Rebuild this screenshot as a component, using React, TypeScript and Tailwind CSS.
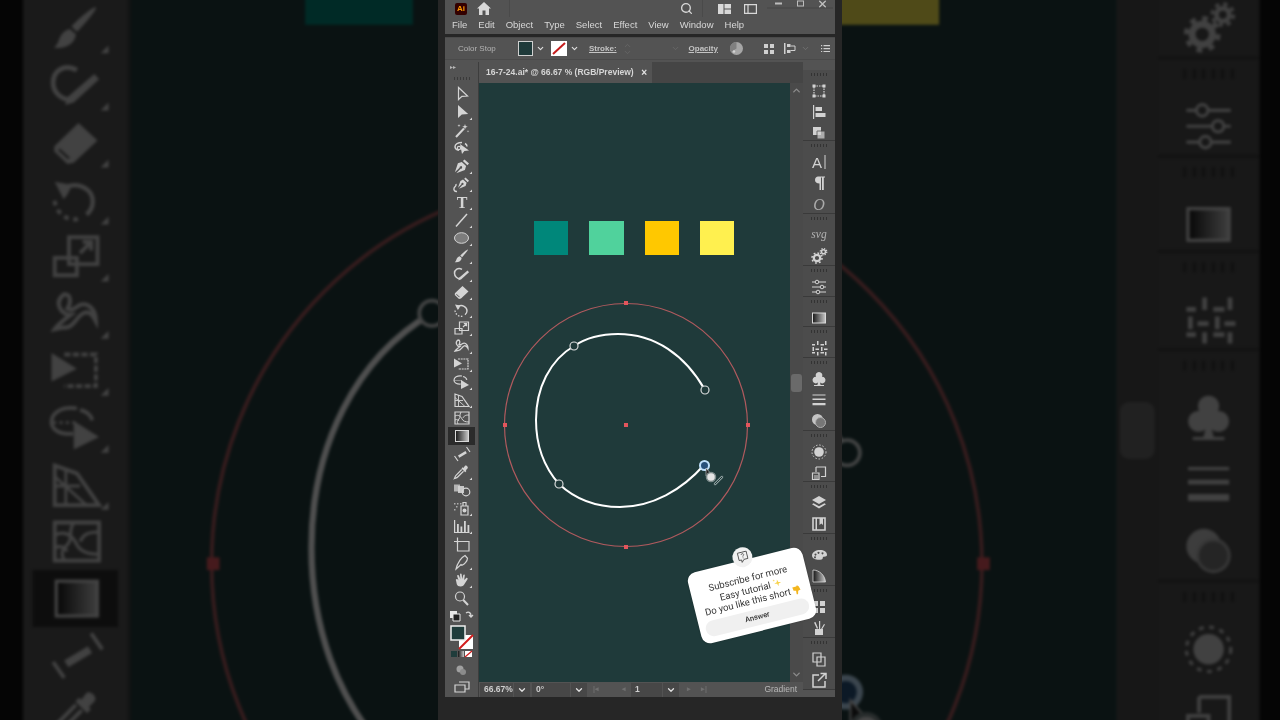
import type { ReactNode } from "react";
import { ChevronDown, ChevronUp, Search } from "lucide-react";

const uiFont = "font-['Liberation_Sans',Arial,sans-serif]";

function Glyph({ w = 22, h = 18, children }: { w?: number; h?: number; children: ReactNode }) {
  return (
    <svg width={w} height={h} viewBox={`0 0 ${w} ${h}`} fill="currentColor" className="block shrink-0">
      {children}
    </svg>
  );
}

function GradientDef({ id }: { id: string }) {
  return (
    <defs>
      <linearGradient id={id}>
        <stop offset="0" stopColor="#151515" />
        <stop offset="1" stopColor="#c8c8c8" />
      </linearGradient>
    </defs>
  );
}

const line = { fill: "none", stroke: "currentColor", strokeWidth: 1.2 };

// left toolbar, top to bottom
const tools: { key: string; corner?: boolean; art: ReactNode }[] = [
  { key: "select", art: <path d="M7.5 2.5v12l3.4-3.2 5.6-.3z" {...line} /> },
  { key: "direct", corner: true, art: <path d="M7 2v13l3.8-3.6 6.4-.4z" /> },
  {
    key: "wand",
    art: (
      <>
        <path d="M5 16l8-8.5" {...line} strokeWidth={2} />
        <path d="M14 3l.7 2 2 .7-2 .7-.7 2-.7-2-2-.7 2-.7zM8 3l.4 1.2 1.2.4-1.2.4L8 6.2 7.600 5l-1.200-.4 1.200-.4zM17 9l.3 1 1 .3-1 .3-.3 1-.3-1-1-.3 1-.3z" />
      </>
    ),
  },
  {
    key: "lasso",
    art: (
      <>
        <path d="M11 3.500c-4 0-7 1.800-7 4.300 0 1.900 1.800 3.200 4 3.500M14 4.500c1.300.7 2 1.700 2 3" {...line} strokeWidth={1.5} />
        <path d="M9 5l2 10 2.400-3 4.600-.4z" />
        <circle cx="8" cy="9" r="1.700" {...line} />
      </>
    ),
  },
  {
    key: "pen",
    corner: true,
    art: (
      <path d="M13.500 2.500l4.500 4-1.600 1.700-4.500-4.200zM10.800 5l4.300 4-1.200 4-8.600 3.300 4.300-4.600a1.300 1.300 0 1 0-1-1L3.900 15.200 6.900 6.300z" />
    ),
  },
  {
    key: "curvature",
    corner: true,
    art: (
      <>
        <path d="M14.500 2.500l3.500 3.300-1.300 1.400-3.500-3.400zM12 4.500l3.600 3.300-1 3.200-6.600 2.800 3.300-3.800a1.100 1.100 0 1 0-.9-.8L7 12.800 9.400 6z" />
        <path d="M6 16.500c-2.800.2-3.600-2-2.800-3.800C4 11 5.500 11.500 5 9" {...line} strokeWidth={1.4} />
      </>
    ),
  },
  {
    key: "type",
    corner: true,
    art: (
      <text x="11" y="15" textAnchor="middle" fontSize="16" fontWeight="700" fontFamily="'Liberation Serif',serif">
        T
      </text>
    ),
  },
  { key: "segment", corner: true, art: <path d="M5 15.500L16 3" {...line} strokeWidth={1.5} /> },
  {
    key: "ellipse",
    corner: true,
    art: <ellipse cx="10.500" cy="9" rx="7" ry="5.300" fill="#7c7c7c" stroke="currentColor" strokeWidth="1" />,
  },
  {
    key: "brush",
    corner: true,
    art: <path d="M17 2.500c.5.500-4 5.800-6 7.700L9.300 8.500c2-2.200 7-6.500 7.700-6zM8.700 9.300l2 1.700c-.3 3-3.400 4.800-7 4.200 2-1 1.200-4.800 5-5.900z" />,
  },
  {
    key: "shaper",
    corner: true,
    art: (
      <>
        <path d="M11 4.300C7 2 3.500 4.600 3.500 8.300c0 3.300 3 5.400 5.500 5.300" {...line} strokeWidth={1.5} />
        <path d="M16.500 5.500l1.500 1.700-8 7.300-2.700.8.8-2.500z" />
      </>
    ),
  },
  {
    key: "eraser",
    corner: true,
    art: <path d="M11.500 3l6 5.500-7.500 7-2 .4-4.200-4 .1-1.600zM5.600 11l-.5.600 3 2.700.8-.3z" fillRule="evenodd" />,
  },
  {
    key: "rotate",
    corner: true,
    art: (
      <>
        <path d="M7 5.500c4-2.300 9.200.2 9 4.500-.1 1.800-.9 3-2 3.800" {...line} strokeWidth={1.4} />
        <path d="M4 9.500c.3 4 4.500 7 8 5.500" {...line} strokeWidth={1.3} strokeDasharray="1.500 1.500" />
        <path d="M4 3.500l5.500 1-1.500 3-1.200 1.500z" />
      </>
    ),
  },
  {
    key: "scale",
    corner: true,
    art: (
      <>
        <path d="M8.500 3h9v8.500h-9zM4 9.500h7V15H4z" {...line} />
        <path d="M12 8l3.500-3.500M12.800 4.500h2.700v2.700" {...line} />
      </>
    ),
  },
  {
    key: "warp",
    corner: true,
    art: (
      <path
        d="M7 3c2.500 0 2 3 1 4.500 2.500 1.500 3.300-2.500 6.500-1 2.500 1.300 2.500 4 2.500 5-1-1.800-2-3.500-4-2.500-2.500 1.300-3 5-6.500 4.500l-2.500.5c1-1.500 3-3 5-4.500C6 9.500 3.500 5.500 7 3z"
        {...line}
        strokeWidth={1.3}
      />
    ),
  },
  {
    key: "free",
    corner: true,
    art: (
      <>
        <path d="M3 3.500l8 5-8 4z" />
        <path d="M7 4h10v10H7" {...line} strokeDasharray="2 .7" />
      </>
    ),
  },
  {
    key: "builder",
    corner: true,
    art: (
      <>
        <path d="M11 3C6 2.300 3 4.500 3 7.300c0 2.700 3 4 6.800 3.700M12 3.500c2 .5 3.500 1.500 3.800 3.300" {...line} />
        <path d="M3.500 7.500h8" {...line} strokeDasharray="1 1" strokeWidth={0.9} />
        <path d="M10 7l8 5-8 4z" />
      </>
    ),
  },
  {
    key: "perspective",
    corner: true,
    art: (
      <>
        <path d="M4 3v12.500h14L11 5.500z" {...line} />
        <path d="M4 9.500h8M4 6.500l10 9M7.500 4v11.500" {...line} strokeWidth={0.9} />
      </>
    ),
  },
  {
    key: "mesh",
    art: (
      <>
        <path d="M4 3h14v12H4z" {...line} />
        <path d="M4 7c4-2 6 1 7 3s3 3 7 3M10 3c-2 3 0 5-2 7s-2 3-1 5M18 6c-4 0-5 1-6 3M4 11c2-1 3 0 4 1" {...line} strokeWidth={1} />
      </>
    ),
  },
  { key: "gradient", art: <rect x="4.500" y="3.500" width="13" height="11" fill="url(#toolGrad)" stroke="#d8d8d8" strokeWidth="1" /> },
  {
    key: "blend-measure",
    art: (
      <>
        <path d="M7 10.500L14.500 6l1.300 2.200-7.500 4.500z" />
        <path d="M3.500 11l3.500 5M15.500 2l3.500 5" {...line} />
      </>
    ),
  },
  {
    key: "dropper",
    corner: true,
    art: (
      <>
        <path d="M14 2.800c1.200-1 3.800 1.400 2.500 2.700l-1.700 1.700.6.800-1.200 1.200-3.700-3.700L11.700 4.300l.7.600z" />
        <path d="M10.700 6.500L5 12.300c-1 1-1 2.200-1.500 3.200 1-.5 2.300-.5 3.200-1.500l5.800-5.700" {...line} />
      </>
    ),
  },
  {
    key: "shapes",
    art: (
      <>
        <path d="M3 3.500h6v7H3z" opacity=".75" />
        <path d="M7 5h6v7H7z" opacity=".9" />
        <circle cx="15" cy="11" r="3.800" {...line} />
      </>
    ),
  },
  {
    key: "spray",
    corner: true,
    art: (
      <>
        <path d="M10 7h7v9h-7zM12 3.500h3V7h-3z" {...line} />
        <circle cx="13.500" cy="11.500" r="2" />
        <path d="M3 4h1.500v1.500H3zM6 4h1.500v1.500H6zM9 4h1.500v1.500H9zM5 7h1.500v1.500H5zM3 10h1.500v1.500H3z" opacity=".7" />
      </>
    ),
  },
  {
    key: "graph",
    corner: true,
    art: <path d="M3.500 15.500V3M3 15h15.500v1H3zM6 7h1.800v8H6zM9.500 9.500h1.800V15H9.500zM13 4h1.800v11H13zM16.500 8h1.800v7h-1.800zM3 3h1.200v12H3z" />,
  },
  {
    key: "artboard",
    art: (
      <>
        <path d="M6.500 6.500h11.500V16H6.500z" {...line} />
        <path d="M3 6.500h6M6.500 2.500v6" {...line} />
      </>
    ),
  },
  {
    key: "slice",
    corner: true,
    art: <path d="M14 2.500l2.500 2.800c0 3-3.500 6-5.500 7l-1-.7-5 4.500c.5-3 2-6 4-9 1.500-2.300 3.500-3.800 5-4.600z" {...line} />,
  },
  {
    key: "hand",
    corner: true,
    art: (
      <path d="M5 9.500c-.7-1 .7-2 1.500-1.200l1 1.200-1.300-4.300c-.3-1.200 1.200-1.700 1.700-.6L9.300 8 9 3.500c0-1.300 1.600-1.300 1.700 0L11.200 8l1-3.800c.3-1.200 1.800-.9 1.600.3L13.200 9l1.800-1.800c1-.9 2.200.2 1.400 1.200L13.500 13c-.8 1.300-1.500 2.500-4 2.500-2 0-3-1-3.700-2.300z" />
    ),
  },
  {
    key: "zoom",
    art: (
      <>
        <circle cx="9" cy="7.500" r="4.500" {...line} />
        <path d="M12.300 11l4.700 5" {...line} strokeWidth={2} />
      </>
    ),
  },
];

function ToolColumn() {
  return (
    <div className="flex w-[34px] shrink-0 flex-col items-center border-r border-[#3d3d3d] bg-[#535353] text-[#d4d4d4]">
      <div className="flex h-[23px] w-full flex-col items-center justify-between pb-[5px] pt-[1px]">
        <span className="self-start pl-[5px] text-[6px] leading-[8px] text-[#b5b5b5]">▸▸</span>
        <div className="h-[3px] w-[16px] bg-[repeating-linear-gradient(90deg,#3a3a3a_0_1px,transparent_1px_3px)]" />
      </div>
      {tools.map((t) => (
        <div
          key={t.key}
          className={`h-[18px] w-[27px] ${t.key === "gradient" ? "bg-[#2b2b2b]" : ""} flex items-center justify-center`}
        >
          <Glyph>
            {t.key === "gradient" && <GradientDef id="toolGrad" />}
            {t.art}
            {t.corner && <path d="M21 14.500V17h-2.500z" fill="#d8d8d8" />}
          </Glyph>
        </div>
      ))}
      <Glyph w={33} h={90}>
        {/* default fill / stroke + swap */}
        <path d="M5 4h7v7H5z" fill="#e8e8e8" />
        <path d="M8 7h7v7H8z" fill="#222" stroke="#e8e8e8" strokeWidth="1" />
        <path d="M21 6c3-2 5 0 5 3M24 8l2 2 2-2" {...line} strokeWidth={1.3} />
        {/* stroke swatch under fill */}
        <path d="M14 28h14v14H14z" fill="#fff" />
        <path d="M14 42L28 28" stroke="#d21c1c" strokeWidth="2" />
        <path d="M6 19h14v14H6z" fill="#1f3c3b" stroke="#eee" strokeWidth="1.500" />
        {/* colour / gradient / none */}
        <path d="M6 44h6v6H6z" fill="#1f3c3b" />
        <rect x="13" y="44" width="6" height="6" fill="url(#toolGrad)" />
        <path d="M20 44h7v6h-7z" fill="#fff" />
        <path d="M20 50l7-6" stroke="#d21c1c" strokeWidth="1.200" />
        {/* draw mode */}
        <circle cx="15" cy="62" r="3.500" fill="#a0a0a0" />
        <circle cx="18" cy="65" r="3" fill="#8b8b8b" />
        {/* screen mode */}
        <path d="M10 78h10v7H10z" {...line} />
        <path d="M14 75h10v7h-4" {...line} />
      </Glyph>
    </div>
  );
}

const panelIcons: Record<string, ReactNode> = {
  transform: (
    <>
      <path d="M4 4h10v10H4z" {...line} strokeDasharray="1.500 1" />
      <path d="M2.500 2.500h3v3h-3zM12.500 2.500h3v3h-3zM2.500 12.500h3v3h-3zM12.500 12.500h3v3h-3z" />
    </>
  ),
  align: <path d="M3 2h1.200v14H3zM5.500 4H12v4H5.500zM5.500 10h10v4h-10z" />,
  pathfinder: (
    <>
      <path d="M3 3h8v8H3z" />
      <path d="M7 7h8v8H7z" opacity=".72" stroke="#4b4b4b" />
    </>
  ),
  char: (
    <>
      <text x="2" y="15" fontSize="15" fontFamily="'Liberation Sans',sans-serif">
        A
      </text>
      <path d="M14.500 2h1v14h-1z" />
    </>
  ),
  para: <path d="M8 2.500h7v1H13.800V16H12V3.500h-1V16H9.500V9.500C6.500 9.500 5 8 5 6c0-2.300 1.500-3.500 3-3.500z" />,
  opentype: (
    <text x="9" y="15" textAnchor="middle" fontSize="16" fontStyle="italic" fontFamily="'Liberation Serif',serif" opacity=".7">
      O
    </text>
  ),
  svg: (
    <text x="9" y="12" textAnchor="middle" fontSize="11.500" fontStyle="italic" fontFamily="'Liberation Serif',serif" opacity=".75">
      svg
    </text>
  ),
  gears: (
    <>
      <circle cx="7" cy="11" r="3.200" fill="none" stroke="currentColor" strokeWidth="2.200" />
      <circle cx="7" cy="11" r="5" fill="none" stroke="currentColor" strokeWidth="1.600" strokeDasharray="1.800 2.100" />
      <circle cx="13.500" cy="4.800" r="2" fill="none" stroke="currentColor" strokeWidth="1.500" />
      <circle cx="13.500" cy="4.800" r="3.300" fill="none" stroke="currentColor" strokeWidth="1.200" strokeDasharray="1.300 1.300" />
    </>
  ),
  sliders: (
    <>
      <path d="M2 4h14M2 9h14M2 14h14" {...line} strokeWidth={1} />
      <circle cx="7" cy="4" r="1.800" fill="#4b4b4b" stroke="currentColor" />
      <circle cx="12" cy="9" r="1.800" fill="#4b4b4b" stroke="currentColor" />
      <circle cx="8" cy="14" r="1.800" fill="#4b4b4b" stroke="currentColor" />
    </>
  ),
  gradient: <rect x="2.500" y="4" width="13" height="10" fill="url(#panelGrad)" stroke="#d8d8d8" strokeWidth="1" />,
  grid: (
    <path d="M2 5h3v1.500H2zM7 2h1.500v4H7zM10.500 5H14v1.500h-3.500zM15 2h1.500v4H15zM2.500 8h1.500v4H2.500zM5.500 9.500H9V11H5.500zM11 8h1.500v4H11zM14 9.500h3.500V11H14zM2 13h3v1.500H2zM7 13h1.500v3.500H7zM10.500 13H14v1.500h-3.500zM15 13h1.500v3.500H15z" />
  ),
  club: (
    <path d="M9 2a3.300 3.300 0 0 1 3 4.800 3.300 3.300 0 1 1-2 5.800l.6 2.400h3.400v1H4v-1h3.400l.6-2.400a3.300 3.300 0 1 1-2-5.800A3.300 3.300 0 0 1 9 2z" />
  ),
  lines: <path d="M2.500 3.500h13v1h-13zM2.500 7.500h13v1.500h-13zM2.500 12h13v2.200h-13z" />,
  circles: (
    <>
      <circle cx="7.500" cy="7.500" r="5.500" opacity=".9" />
      <circle cx="10.500" cy="10.500" r="5" fill="#777" stroke="#b0b0b0" />
    </>
  ),
  glow: (
    <>
      <circle cx="9" cy="9" r="4.800" />
      <circle cx="9" cy="9" r="7" fill="none" stroke="currentColor" strokeDasharray="1.500 1.800" />
    </>
  ),
  artboards: (
    <>
      <path d="M6 3h9.500v9.500H11" {...line} />
      <path d="M6 3v5" {...line} />
      <path d="M2.500 9h6.500v6.500H2.500z" {...line} />
      <path d="M4 11h4v4H4z" opacity=".5" />
    </>
  ),
  layers: <path d="M9 2l7 4-7 4-7-4zM3.600 9.200L9 12.300l5.400-3.100L16 10.300 9 14.500 2 10.300z" />,
  book: (
    <>
      <path d="M3 3h12v12H3z" {...line} strokeWidth={1.6} />
      <path d="M5.500 3h1.500v12H5.500zM9.500 3H13v7l-1.700-1.500L9.500 10z" />
    </>
  ),
  palette: (
    <path
      fillRule="evenodd"
      d="M10 4c4 0 7 2 7 4.700 0 2-2.500 1.800-3.600 2.100-1.200.4.200 2-1.900 2.700C8 14.500 2 13.300 2 9.500 2 6 6 4 10 4zm-1.500 1.800a1 1 0 1 0 .01 0zM5.500 7.500a1 1 0 1 0 .01 0zM12.500 6.300a1 1 0 1 0 .01 0zM5 10.300a1 1 0 1 0 .01 0z"
    />
  ),
  fade: <path d="M3 3c6 0 12 5 12.500 12H3z" fill="url(#panelGrad)" stroke="#d8d8d8" strokeWidth=".8" />,
  swatch: <path d="M3 3h5v5H3zM10 3h5v5h-5zM3 10h5v5H3zM10 10h5v5h-5z" />,
  brushes: (
    <>
      <path d="M5 10h8v6H5z" />
      <path d="M7 10L4 3.500 5.500 3 8 9zM9 10V2h1.200v8zM11 10l3-5 1 .5-3 5z" />
    </>
  ),
  copy: <path d="M3 3h8v9H3zM7 7h8v9H7z" {...line} />,
  export: (
    <>
      <path d="M9 4H3v12h12v-6" {...line} strokeWidth={1.5} />
      <path d="M8 10l7-7M10.500 2.500H16V8" {...line} strokeWidth={1.5} />
    </>
  ),
};

const panelGroups: { h: number; icons: string[] }[] = [
  { h: 71, icons: ["transform", "align", "pathfinder"] },
  { h: 73, icons: ["char", "para", "opentype"] },
  { h: 52, icons: ["svg", "gears"] },
  { h: 31, icons: ["sliders"] },
  { h: 30, icons: ["gradient"] },
  { h: 31, icons: ["grid"] },
  { h: 73, icons: ["club", "lines", "circles"] },
  { h: 51, icons: ["glow", "artboards"] },
  { h: 52, icons: ["layers", "book"] },
  { h: 52, icons: ["palette", "fade"] },
  { h: 52, icons: ["swatch", "brushes"] },
  { h: 52, icons: ["copy", "export"] },
];

function PanelDock() {
  return (
    <div className="flex w-[32px] shrink-0 flex-col bg-[#535353] pt-[8px] text-[#d2d2d2]">
      {panelGroups.map((g) => (
        <div
          key={g.icons[0]}
          className="flex flex-col items-center border-b border-[#3a3a3a] bg-[#4c4c4c] pt-[3px]"
          style={{ height: g.h }}
        >
          <div className="mb-[4px] h-[3px] w-[16px] shrink-0 bg-[repeating-linear-gradient(90deg,#333333_0_1px,transparent_1px_3px)]" />
          {g.icons.map((name) => (
            <div key={name} className="flex h-[21px] shrink-0 items-center">
              <Glyph w={18} h={18}>
                {name === "gradient" || name === "fade" ? (
                  <defs>
                    <linearGradient id="panelGrad">
                      <stop offset="0" stopColor="#151515" />
                      <stop offset="1" stopColor="#c8c8c8" />
                    </linearGradient>
                  </defs>
                ) : null}
                {panelIcons[name]}
              </Glyph>
            </div>
          ))}
        </div>
      ))}
    </div>
  );
}

function Artwork() {
  const bbox = [
    [626, 303],
    [505, 425],
    [748, 425],
    [626, 547],
    [626, 425],
  ];
  const anchors = [
    [705, 390],
    [574, 346],
    [559, 484],
  ];
  return (
    <svg viewBox="479 83 311 599" width={311} height={599} className="block">
      <rect x="534" y="221" width="34" height="34" fill="#00877a" />
      <rect x="589" y="221" width="35" height="34" fill="#50d29c" />
      <rect x="645" y="221" width="34" height="34" fill="#ffc800" />
      <rect x="700" y="221" width="34" height="34" fill="#fff04f" />
      <circle cx="626" cy="425" r="121.500" fill="none" stroke="#b05a5e" strokeWidth="1.200" />
      {bbox.map(([x, y]) => (
        <rect key={`${x}-${y}`} x={x - 2} y={y - 2} width="4" height="4" fill="#e2555c" />
      ))}
      <path
        d="M705 390C685 355 655 334 618 334 600 334 586 338 574 346 550 360 536 388 536 420 536 445 544 467 559 484 575 499 597 507 620 507 652 507 682 490 704 465"
        fill="none"
        stroke="#ffffff"
        strokeWidth="2"
      />
      {anchors.map(([x, y]) => (
        <circle key={x} cx={x} cy={y} r="4" fill="#1f3a3a" stroke="#d9dcdc" strokeWidth="1.200" />
      ))}
      <circle cx="704.500" cy="465.500" r="4.500" fill="#26507a" stroke="#bfe0fb" strokeWidth="2" />
      <path d="M706 468v8l2-2 3-.2z" fill="#222" stroke="#ddd" strokeWidth=".6" />
      <circle cx="711" cy="477" r="4.500" fill="#e4e4e4" stroke="#7d8c8c" strokeWidth="1.500" />
      <path d="M715 484l7-7" stroke="#8fa0a0" strokeWidth="2.500" strokeLinecap="round" />
      <path d="M715 484l7-7" stroke="#1f3a3a" strokeWidth="1" strokeLinecap="round" />
    </svg>
  );
}

function Workspace({ chrome }: { chrome: boolean }) {
  return (
    <div className="flex h-[635px] w-[390px] bg-[#535353]">
      <ToolColumn />
      <div className="flex min-w-0 flex-1 flex-col">
        <div className="flex h-[21px] shrink-0 bg-[#454545]">
          {chrome && (
            <div className={`flex w-[173px] items-center justify-between bg-[#535353] pl-[7px] pr-[5px] text-[8.500px] font-bold text-[#d6d6d6] ${uiFont}`}>
              <span>16-7-24.ai* @ 66.67 % (RGB/Preview)</span>
              <span className="text-[10px] leading-none text-[#e4e4e4]">×</span>
            </div>
          )}
        </div>
        <div className="flex min-h-0 flex-1">
          <div className="h-[599px] w-[311px] shrink-0 bg-[#1f3a3a]">
            <Artwork />
          </div>
          <div className="flex h-[599px] flex-1 flex-col items-center justify-between bg-[#4a4a4a] py-[2px] text-[#8b8b8b]">
            <ChevronUp size={11} strokeWidth={3} />
            <div className="h-[18px] w-[11px] rounded-[3px] bg-[#6a6a6a]" />
            <ChevronDown size={11} strokeWidth={3} />
          </div>
        </div>
        <div className="h-[15px] shrink-0 bg-[#535353]">{chrome && <StatusBar />}</div>
      </div>
      <PanelDock />
    </div>
  );
}

function StatusBar() {
  const caret = <ChevronDown size={10} strokeWidth={3} className="text-[#e0e0e0]" />;
  return (
    <div className={`flex h-full items-center text-[8.500px] font-bold text-[#cfcfcf] ${uiFont}`}>
      <div className="ml-[1px] flex h-[14px] w-[33px] items-center bg-[#474747] pl-[4px]">66.67%</div>
      <div className="ml-[1px] flex h-[14px] w-[16px] items-center justify-center bg-[#474747]">{caret}</div>
      <div className="ml-[2px] flex h-[14px] w-[38px] items-center bg-[#474747] pl-[4px]">0°</div>
      <div className="ml-[1px] flex h-[14px] w-[16px] items-center justify-center bg-[#474747]">{caret}</div>
      <div className="ml-[6px] flex w-[33px] justify-between text-[7px] text-[#6f6f6f]">
        <span>|◂</span>
        <span>◂</span>
      </div>
      <div className="ml-[5px] flex h-[14px] w-[31px] items-center bg-[#474747] pl-[4px]">1</div>
      <div className="ml-[1px] flex h-[14px] w-[16px] items-center justify-center bg-[#474747]">{caret}</div>
      <div className="ml-[8px] flex w-[20px] justify-between text-[7px] text-[#6f6f6f]">
        <span>▸</span>
        <span>▸|</span>
      </div>
      <span className="ml-auto mr-[6px] font-normal text-[#b8b8b8]">Gradient</span>
    </div>
  );
}

function TitleBar() {
  return (
    <div className="flex h-[17px] items-center bg-[#535353] text-[#d8d8d8]">
      <div className={`ml-[10px] flex h-[12px] w-[12px] items-center justify-center rounded-[2px] bg-[#330000] text-[8px] font-bold leading-none text-[#ff9a00] ${uiFont}`}>
        Ai
      </div>
      <svg width="14" height="13" viewBox="0 0 14 13" fill="currentColor" className="ml-[10px]">
        <path d="M7 0l7 6.500h-2V13H8.500V8.500h-3V13H2V6.500H0z" />
      </svg>
      <div className="ml-[18px] h-[17px] w-px bg-[#4a4a4a]" />
      <Search size={13} strokeWidth={2.500} className="ml-[170px]" />
      <div className="ml-[9px] h-[17px] w-px bg-[#4a4a4a]" />
      <svg width="13" height="10" viewBox="0 0 13 10" fill="currentColor" className="ml-[15px]">
        <path d="M0 0h5.500v10H0zM6.500 0H13v4.500H6.500zM6.500 5.500H13V10H6.500z" />
      </svg>
      <svg width="13" height="10" viewBox="0 0 13 10" fill="none" stroke="currentColor" strokeWidth="1.200" className="ml-[13px]">
        <path d="M.6.6h11.800v8.800H.6zM4 .6v8.800" />
      </svg>
      <div className="relative ml-auto mr-[2px] flex h-[8px] w-[66px] -translate-y-[4.500px] items-center justify-around border-b border-[#474747] text-[#bdbdbd]">
        <span className="h-[2px] w-[7px] bg-current" />
        <span className="h-[6px] w-[7px] border border-current" />
        <svg width="7" height="7" viewBox="0 0 7 7" stroke="currentColor" strokeWidth="1.400">
          <path d="M0 0l7 7M7 0L0 7" />
        </svg>
      </div>
    </div>
  );
}

function MenuBar() {
  return (
    <div className={`flex h-[17px] items-center gap-[11px] bg-[#535353] pl-[7px] text-[9.500px] text-[#d8d8d8] ${uiFont}`}>
      {["File", "Edit", "Object", "Type", "Select", "Effect", "View", "Window", "Help"].map((m) => (
        <span key={m}>{m}</span>
      ))}
    </div>
  );
}

function ControlBar() {
  const caret = <ChevronDown size={9} strokeWidth={3} className="text-[#e0e0e0]" />;
  return (
    <div className={`mt-[3px] flex h-[23px] items-center border-y border-[#4a4a4a] bg-[#535353] text-[8px] text-[#c4c4c4] ${uiFont}`}>
      <span className="ml-[13px] w-[60px] shrink-0 text-[#b4b4b4]">Color Stop</span>
      <div className="h-[15px] w-[15px] border border-[#d0d0d0] bg-[#1f3a3a]" />
      <div className="ml-[2px] flex w-[11px] justify-center">{caret}</div>
      <svg width="16" height="15" viewBox="0 0 16 15" className="ml-[5px]">
        <path d="M0 0h16v15H0z" fill="#fff" />
        <path d="M2 13L14 2" stroke="#c51c1c" strokeWidth="2" />
      </svg>
      <div className="ml-[2px] flex w-[11px] justify-center">{caret}</div>
      <span className="ml-[9px] font-bold underline">Stroke:</span>
      <div className="ml-[6px] flex flex-col text-[#696969]">
        <ChevronUp size={9} strokeWidth={2} className="-mb-[2px]" />
        <ChevronDown size={9} strokeWidth={2} />
      </div>
      <ChevronDown size={9} strokeWidth={2} className="ml-[39px] text-[#6c6c6c]" />
      <span className="ml-[9px] font-bold underline">Opacity</span>
      <svg width="13" height="13" viewBox="0 0 13 13" className="ml-[12px]">
        <circle cx="6.500" cy="6.500" r="6.500" fill="#a6a6a6" />
        <path d="M6.500 0A6.500 6.500 0 0 0 1 10l5.500-3.500z" fill="#808080" />
        <circle cx="4" cy="9.500" r="1.200" fill="#d4d4d4" />
      </svg>
      <svg width="10" height="10" viewBox="0 0 10 10" fill="#d0d0d0" className="ml-[21px]">
        <path d="M0 0h4v4H0zM6 0h4v4H6zM0 6h4v4H0zM6 6h4v4H6z" />
      </svg>
      <svg width="12" height="11" viewBox="0 0 12 11" fill="#d0d0d0" className="ml-[10px]">
        <path d="M0 0h1.500v11H0zM3 1h3.500v3H3zM3 7h3.500v3H3z" />
        <path d="M6.500 3H11v4.500H6.500" fill="none" stroke="#d0d0d0" />
      </svg>
      <ChevronDown size={9} strokeWidth={2} className="ml-[5px] text-[#787878]" />
      <svg width="9" height="7" viewBox="0 0 9 7" fill="#d0d0d0" className="ml-[11px]">
        <path d="M0 0h1.200v1.200H0zM2.500 0H9v1.200H2.500zM0 3h1.200v1.200H0zM2.500 3H9v1.200H2.500zM0 6h1.200v1H0zM2.500 6H9v1H2.500z" />
      </svg>
    </div>
  );
}

function StickerPrompt() {
  return (
    <div className="absolute left-[248px] top-[559px] z-10 flex h-[73px] w-[118px] rotate-[-14deg] flex-col items-center rounded-[9px] bg-white pt-[13px] font-['Roboto',sans-serif] text-[9.500px] leading-[11.500px] text-[#333333] shadow-[0_0_2px_rgba(0,0,0,0.25)]">
      <div className="absolute -top-[13px] left-[49px] flex h-[20px] w-[20px] items-center justify-center rounded-full bg-[#f1f1f1]">
        <svg width="11" height="12" viewBox="0 0 11 12" fill="none" stroke="#555" strokeWidth=".9">
          <path d="M1 1h9v7.500H6L3.500 11V8.500H1z" />
          <path d="M4.200 3.500c.2-1.400 2.600-1.300 2.600.1 0 1-1.300 1-1.300 2M5.500 6.400v.9" strokeWidth=".8" />
        </svg>
      </div>
      <span>Subscribe for more</span>
      <span className="flex items-center gap-[2px]">
        Easy tutorial
        <svg width="9" height="9" viewBox="0 0 9 9" fill="#f7d24a">
          <path d="M5 1l.8 2.700L8.500 4.500 5.800 5.300 5 8l-.8-2.700L1.500 4.500l2.700-.8zM1.700 0l.3 1 1 .3-1 .3-.3 1-.3-1-1-.3 1-.3z" />
        </svg>
      </span>
      <span className="flex items-center gap-[1px] whitespace-nowrap">
        Do you like this short
        <svg width="10" height="10" viewBox="0 0 10 10" fill="#f3b61f">
          <path d="M1 1.500h4l1-1 1.500 1.200 1 3.800-2.500.5L5 9.500 3.700 9l.2-3.500L1.500 5z" />
        </svg>
      </span>
      <div className="mt-[3px] flex h-[16px] w-[106px] items-center justify-center rounded-full bg-[#f0f0f0] text-[7.500px] font-medium text-[#333333]">
        Answer
      </div>
    </div>
  );
}

export default function App() {
  return (
    <div className="relative flex h-[720px] w-[1280px] justify-center overflow-hidden bg-[#050505]">
      {/* blurred, zoomed-in copy of the workspace behind the phone-width video */}
      <div className="absolute left-[23px] top-[-587px] origin-top-left scale-[3.17] blur-[0.5px] brightness-[0.31]" aria-hidden>
        <Workspace chrome={false} />
      </div>

      <div className="relative h-[720px] w-[404px] shrink-0 bg-[#262626] pl-[7px] blur-[0.3px]">
        <div className="relative w-[390px]">
          <TitleBar />
          <MenuBar />
          <ControlBar />
          <div className="h-[2px] bg-[#535353]" />
          <Workspace chrome />
          <StickerPrompt />
        </div>
      </div>
    </div>
  );
}
